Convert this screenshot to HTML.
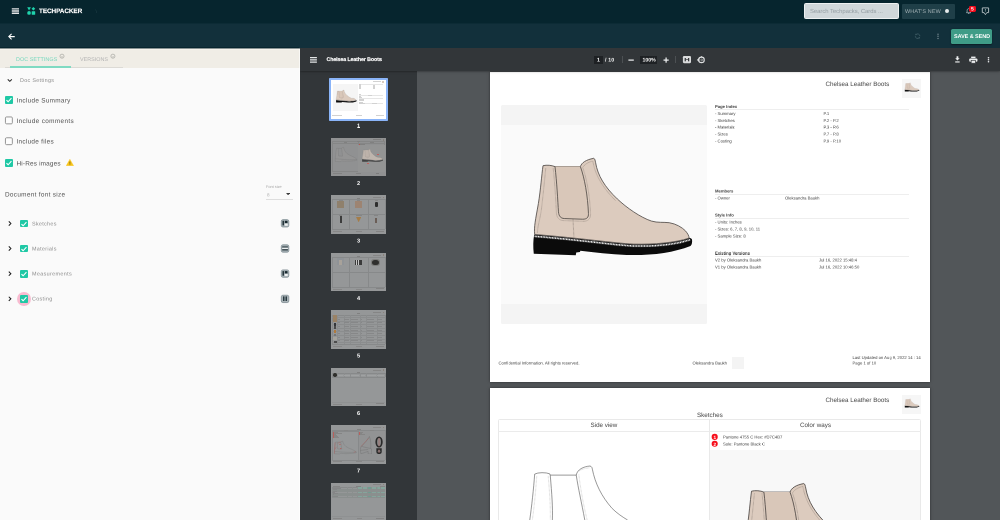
<!DOCTYPE html>
<html><head><meta charset="utf-8"><title>Techpacker</title>
<style>
*{box-sizing:border-box;margin:0;padding:0}
html,body{width:1000px;height:520px;overflow:hidden;background:#fafafa;font-family:"Liberation Sans",sans-serif}
.a{position:absolute}
#tx{position:absolute;left:0;top:0;width:2000px;height:1040px;transform:scale(.5);transform-origin:0 0;pointer-events:none;will-change:transform;overflow:hidden}
.t{position:absolute;white-space:pre;line-height:1;transform:rotate(.02deg);transform-origin:0 0;text-rendering:geometricPrecision}
#top{left:0;top:0;width:1000px;height:23px;background:#06252e}
#bar2{left:0;top:23px;width:1000px;height:25px;background:#12303b}
#left{left:0;top:48px;width:300px;height:472px;background:#fafafa}
#tabs{left:0;top:48px;width:300px;height:20px;background:#f0ede6}
#pdf{left:300px;top:48px;width:700px;height:472px;background:#525659;overflow:hidden}
#pdfbar{left:0;top:0;width:700px;height:22.5px;background:#323639;box-shadow:0 0 2.5px rgba(0,0,0,.6)}
#side{left:0;top:22px;width:117px;height:450px;background:#323639}
.pg{background:#fff;box-shadow:0 0 2.5px rgba(0,0,0,.5)}
.cb{position:absolute;width:7.8px;height:7.8px;border-radius:1px}
.cb.on{background:#1fc8a5}
.cb.off{border:.9px solid #8d8d8d;background:#fdfdfd;border-radius:1.2px}
.th{position:absolute;left:31px;width:55px;height:38.600px;background:#959798;overflow:hidden}
.ln{position:absolute;height:.6px;background:#eeeeee}
.ic{position:absolute;left:281px;width:8px;height:8px;border:1px solid #3b4a51;border-radius:1.6px;background:#b9c3c7}
.ic i{position:absolute;background:#34444b}
.chev{position:absolute}
</style></head><body>

<div class="a" id="top">
  <svg class="a" style="left:11px;top:7px" width="10" height="9" viewBox="0 0 10 9"><path d="M.8 1.800h7.200M.8 4h7.200M.8 6.200h7.200" stroke="#e2e4e5" stroke-width="1.350"/></svg>
  <svg class="a" style="left:27px;top:7px" width="9" height="9" viewBox="0 0 9 9"><path d="M.2 .2h3.700L2.050 3.500z" fill="#1fd3ad"/><path d="M6.400 .1l1.850 1.750L6.400 3.600 4.550 1.850z" fill="#1fd3ad"/><circle cx="2.050" cy="5.900" r="1.850" fill="#1fd3ad"/><rect x="4.700" y="4.150" width="3.500" height="3.500" rx=".3" fill="#1fd3ad"/></svg>
  
  <div class="a" style="left:804px;top:3px;width:95.300px;height:16px;background:#d0d7da;border:1px solid #eef1f2;border-radius:1.500px"></div>
  <div class="a" style="left:902px;top:4px;width:53px;height:14.500px;background:#1f3f48;border-radius:1px"></div>
  <div class="a" style="left:944.800px;top:9px;width:3.800px;height:3.800px;border-radius:50%;background:#e8ecec"></div>
  <svg class="a" style="left:965.800px;top:7.700px" width="5.600" height="6.400" viewBox="0 0 7 8"><path d="M3.500 .8C2 .8 1.400 2 1.400 3.200V5L.6 5.900h5.800L5.600 5V3.200C5.600 2 5 .8 3.500 .8z" fill="none" stroke="#a9b5b9" stroke-width="1"/><circle cx="3.500" cy="7" r=".8" fill="#a9b5b9"/></svg>
  <div class="a" style="left:969.300px;top:6px;width:6.500px;height:6.200px;border-radius:1.400px;background:#f20d1d"></div>
  <svg class="a" style="left:981px;top:7px" width="9" height="9" viewBox="0 0 9 9"><path d="M1.300 .9h6.300v4.700H5.800L4.450 7.700 3.100 5.600H1.300z" fill="none" stroke="#a9b5b9" stroke-width="1" stroke-linejoin="round"/><path d="M4.450 2v1.700M4.450 4.300v.5" stroke="#a9b5b9" stroke-width=".8"/></svg>
</div>
<div class="a" id="bar2">
  <svg class="a" style="left:7.700px;top:9.600px" width="7.200" height="7.200" viewBox="0 0 8 8"><path d="M7.500 4H1.300M4 .9L.9 4 4 7.100" fill="none" stroke="#fff" stroke-width="1.200"/></svg>
  <svg class="a" style="left:912px;top:8px" width="11" height="11" viewBox="0 0 11 11"><g fill="none" stroke="#3f5c65" stroke-width=".85"><path d="M7.900 5.200A2.300 2.300 0 0 0 3.900 3.650"/><path d="M3.300 5.200A2.300 2.300 0 0 0 7.300 6.750"/></g><path d="M3.200 2.600L3.400 4.300 5 3.900z" fill="#3f5c65"/><path d="M8 7.800L7.800 6.100 6.200 6.500z" fill="#3f5c65"/></svg>
  <svg class="a" style="left:934px;top:8px" width="8" height="11" viewBox="0 0 8 11"><g fill="#71868d"><circle cx="4" cy="3.200" r=".75"/><circle cx="4" cy="5.300" r=".75"/><circle cx="4" cy="7.400" r=".75"/></g></svg>
  <div class="a" style="left:951px;top:6px;width:41.400px;height:14.500px;background:#3f9c87;border-radius:1.500px;box-shadow:0 .8px 1.500px rgba(0,0,0,.4)"></div>
</div>
<div class="a" id="left"></div>
<div class="a" id="tabs"></div>
<div class="a" style="left:0;top:48px;width:300px;height:1px;background:#899394"></div><div class="a" style="left:0;top:49px;width:300px;height:1px;background:#f5f2ec"></div>
<div class="a" style="left:5px;top:67.300px;width:118px;height:.7px;background:#dcdad5"></div>
<div class="a" style="left:9.800px;top:65.900px;width:61.200px;height:1.700px;background:#7fdac2"></div>
<svg class="a" style="left:57px;top:51px" width="10" height="10" viewBox="0 0 10 10"><circle cx="5.00" cy="5.20" r="2.050" fill="none" stroke="#a6a6a1" stroke-width=".7"/><path d="M3.90 5.60Q5.00 6.70 6.10 5.60" fill="none" stroke="#a6a6a1" stroke-width=".6"/></svg><svg class="a" style="left:107px;top:51px" width="10" height="10" viewBox="0 0 10 10"><circle cx="5.90" cy="5.20" r="2.050" fill="none" stroke="#a6a6a1" stroke-width=".7"/><path d="M4.80 5.60Q5.90 6.70 7.00 5.60" fill="none" stroke="#a6a6a1" stroke-width=".6"/></svg>
<svg class="a" style="left:5px;top:76px" width="9" height="9" viewBox="0 0 9 9"><path d="M2.75 3.30L4.80 5.35L6.85 3.30" fill="none" stroke="#2a2a2a" stroke-width="1.050"/></svg>
<div class="cb on" style="left:5px;top:96.1px"><svg width="7.800" height="7.800" viewBox="0 0 8 8" style="position:absolute;left:0;top:0"><path d="M1.500 4.200L3.200 5.900 6.600 2.300" fill="none" stroke="#fff" stroke-width="1.100"/></svg></div><svg class="a" style="left:4px;top:115px" width="11" height="11" viewBox="0 0 11 11"><rect x="1.45" y="1.95" width="6.900" height="6.900" rx="1.100" fill="#fdfdfd" stroke="#8a8a8a" stroke-width=".9"/></svg><svg class="a" style="left:4px;top:136px" width="11" height="11" viewBox="0 0 11 11"><rect x="1.45" y="1.75" width="6.900" height="6.900" rx="1.100" fill="#fdfdfd" stroke="#8a8a8a" stroke-width=".9"/></svg><div class="cb on" style="left:5px;top:158.9px"><svg width="7.800" height="7.800" viewBox="0 0 8 8" style="position:absolute;left:0;top:0"><path d="M1.500 4.200L3.200 5.900 6.600 2.300" fill="none" stroke="#fff" stroke-width="1.100"/></svg></div>
<svg class="a" style="left:66.300px;top:158.800px" width="7.800" height="7.200" viewBox="0 0 7.800 7.200"><path d="M3.900 .3L7.600 6.800H.2z" fill="#f8c419" stroke="#f8c419" stroke-width=".4" stroke-linejoin="round"/><path d="M3.900 2.600v2.200M3.900 5.400v.7" stroke="#6b5a1a" stroke-width=".8"/></svg>
<div class="a" style="left:16.900px;top:291.900px;width:13.800px;height:13.800px;border-radius:50%;background:#f8bbd0"></div>
<svg class="a" style="left:5px;top:219px" width="9" height="9" viewBox="0 0 9 9"><path d="M3.80 2.45L5.85 4.50L3.80 6.55" fill="none" stroke="#1c1c1c" stroke-width="1.050"/></svg><div class="cb on" style="left:19.9px;top:219.6px"><svg width="7.800" height="7.800" viewBox="0 0 8 8" style="position:absolute;left:0;top:0"><path d="M1.500 4.200L3.200 5.900 6.600 2.300" fill="none" stroke="#fff" stroke-width="1.100"/></svg></div><svg class="a" style="left:279px;top:218px" width="11" height="11" viewBox="0 0 11 11"><rect x="2.35" y="1.65" width="7.400" height="7.300" rx="1.500" fill="#aab4b8" stroke="#87949a" stroke-width=".9"/><rect x="3.50" y="2.80" width="1.4" height="4.6" fill="#16262d"/><rect x="5.80" y="2.80" width="2.7" height="2.5" fill="#16262d"/><rect x="5.80" y="5.50" width="2.9" height="2.3" fill="#eef1f2"/></svg>
<svg class="a" style="left:5px;top:244px" width="9" height="9" viewBox="0 0 9 9"><path d="M3.80 2.45L5.85 4.50L3.80 6.55" fill="none" stroke="#1c1c1c" stroke-width="1.050"/></svg><div class="cb on" style="left:19.9px;top:244.6px"><svg width="7.800" height="7.800" viewBox="0 0 8 8" style="position:absolute;left:0;top:0"><path d="M1.500 4.200L3.200 5.900 6.600 2.300" fill="none" stroke="#fff" stroke-width="1.100"/></svg></div><svg class="a" style="left:279px;top:243px" width="11" height="11" viewBox="0 0 11 11"><rect x="2.35" y="1.85" width="7.400" height="7.300" rx="1.500" fill="#aab4b8" stroke="#87949a" stroke-width=".9"/><rect x="3.20" y="3.50" width="5.7" height="1.1" fill="#16262d"/><rect x="3.20" y="4.70" width="5.7" height="1.5" fill="#eef1f2"/><rect x="3.20" y="6.30" width="5.7" height="1.1" fill="#16262d"/></svg>
<svg class="a" style="left:5px;top:269px" width="9" height="9" viewBox="0 0 9 9"><path d="M3.80 2.65L5.85 4.70L3.80 6.75" fill="none" stroke="#1c1c1c" stroke-width="1.050"/></svg><div class="cb on" style="left:19.9px;top:269.8px"><svg width="7.800" height="7.800" viewBox="0 0 8 8" style="position:absolute;left:0;top:0"><path d="M1.500 4.200L3.200 5.900 6.600 2.300" fill="none" stroke="#fff" stroke-width="1.100"/></svg></div><svg class="a" style="left:279px;top:268px" width="11" height="11" viewBox="0 0 11 11"><rect x="2.35" y="1.95" width="7.400" height="7.300" rx="1.500" fill="#aab4b8" stroke="#87949a" stroke-width=".9"/><rect x="3.50" y="3.10" width="1.4" height="4.6" fill="#16262d"/><rect x="5.80" y="3.10" width="2.7" height="2.5" fill="#16262d"/><rect x="5.80" y="5.80" width="2.9" height="2.3" fill="#eef1f2"/></svg>
<svg class="a" style="left:5px;top:294px" width="9" height="9" viewBox="0 0 9 9"><path d="M3.80 2.75L5.85 4.80L3.80 6.85" fill="none" stroke="#1c1c1c" stroke-width="1.050"/></svg><div class="cb on" style="left:19.9px;top:294.90000000000003px"><svg width="7.800" height="7.800" viewBox="0 0 8 8" style="position:absolute;left:0;top:0"><path d="M1.500 4.200L3.200 5.900 6.600 2.300" fill="none" stroke="#fff" stroke-width="1.100"/></svg></div><svg class="a" style="left:279px;top:293px" width="11" height="11" viewBox="0 0 11 11"><rect x="2.35" y="2.25" width="7.400" height="7.300" rx="1.500" fill="#aab4b8" stroke="#87949a" stroke-width=".9"/><rect x="4.15" y="3.40" width="1.300" height="4.600" fill="#16262d"/><rect x="6.550" y="3.40" width="1.300" height="4.600" fill="#16262d"/></svg>
<div class="a" style="left:266px;top:199.400px;width:26.500px;height:.6px;background:#dedede"></div>
<svg class="a" style="left:286px;top:193px" width="4.200" height="2.400" viewBox="0 0 4.200 2.400"><path d="M0 0h4.200L2.100 2.300z" fill="#3c3c3c"/></svg>

<div class="a" id="pdf">
<div class="a" id="main" style="left:0;top:0;width:700px;height:472px">
<div class="a pg" style="left:190px;top:24px;width:440px;height:310px">
<div class="a" style="left:10.800px;top:32.900px;width:206.500px;height:219.100px;background:#f4f4f4;border-radius:1.500px"></div>
<div class="a" style="left:10.800px;top:52.900px;width:206.500px;height:179.400px;background:#fafafa"></div>
<svg class="a" style="left:35.00px;top:78.00px;" width="180.00" height="120.00" viewBox="0 0 780 520"><path d="M40,366 C250,383 380,403 470,408 C560,410 650,403 714,380 L723,386 C726,398 724,410 717,416 C640,447 540,458 440,455 C370,452 300,445 240,437 L238,442 L222,444 L220,456 L38,450 C35,420 35,390 40,366Z" fill="#0b0b0b"/><path d="M78,68 C95,64 115,66 130,72 L240,72 C245,55 265,42 298,36 C303,38 304,45 306,55 C315,110 345,160 400,212 C440,250 500,292 548,308 C575,316 600,312 625,315 C655,320 680,335 695,350 C705,362 711,372 711,382 C650,402 560,410 470,408 C380,403 250,383 42,366 C38,335 46,300 58,232 C68,170 72,110 78,68Z" fill="#dccbbe" stroke="#45403d" stroke-width="3.400" stroke-linejoin="round"/><path d="M130,72 C138,140 142,220 145,268 C147,288 155,296 170,297 L250,300 C268,300 276,292 275,275 C272,200 258,120 240,72" fill="#d9c7b9" stroke="#47413e" stroke-width="3.400"/><path d="M208,300 L212,378" fill="none" stroke="#5f5752" stroke-width="2.200" stroke-dasharray="3 2.500"/><path d="M90,78 C84,140 78,200 72,250 C66,300 54,330 54,358" fill="none" stroke="#6f655f" stroke-width="2.200" stroke-dasharray="2.500 2.500"/><path d="M122,78 C130,150 134,230 136,272 C138,296 150,306 170,306 L252,309 C276,309 285,296 284,275 C281,200 268,125 250,76 C258,62 275,52 294,48 C304,110 338,165 393,220" fill="none" stroke="#6f655f" stroke-width="2.200" stroke-dasharray="2.500 2.500"/><path d="M42,374 C250,391 380,411 470,416 C560,418 650,411 717,388" fill="none" stroke="#333" stroke-width="11"/><path d="M42,374 C250,391 380,411 470,416 C560,418 650,411 717,388" fill="none" stroke="#fff" stroke-width="6.500" stroke-dasharray="4 2.800"/></svg>
<div class="a" style="left:412px;top:6.600px;width:18.800px;height:19.100px;background:#f6f6f6"></div>
<svg class="a" style="left:414.04px;top:10.14px;" width="16.47" height="10.98" viewBox="0 0 780 520"><path d="M40,366 C250,383 380,403 470,408 C560,410 650,403 714,380 L723,386 C726,398 724,410 717,416 C640,447 540,458 440,455 C370,452 300,445 240,437 L238,442 L222,444 L220,456 L38,450 C35,420 35,390 40,366Z" fill="#0b0b0b"/><path d="M78,68 C95,64 115,66 130,72 L240,72 C245,55 265,42 298,36 C303,38 304,45 306,55 C315,110 345,160 400,212 C440,250 500,292 548,308 C575,316 600,312 625,315 C655,320 680,335 695,350 C705,362 711,372 711,382 C650,402 560,410 470,408 C380,403 250,383 42,366 C38,335 46,300 58,232 C68,170 72,110 78,68Z" fill="#dccbbe" stroke="#45403d" stroke-width="3.400" stroke-linejoin="round"/><path d="M130,72 C138,140 142,220 145,268 C147,288 155,296 170,297 L250,300 C268,300 276,292 275,275 C272,200 258,120 240,72" fill="#d9c7b9" stroke="#47413e" stroke-width="3.400"/><path d="M208,300 L212,378" fill="none" stroke="#5f5752" stroke-width="2.200" stroke-dasharray="3 2.500"/><path d="M90,78 C84,140 78,200 72,250 C66,300 54,330 54,358" fill="none" stroke="#6f655f" stroke-width="2.200" stroke-dasharray="2.500 2.500"/><path d="M122,78 C130,150 134,230 136,272 C138,296 150,306 170,306 L252,309 C276,309 285,296 284,275 C281,200 268,125 250,76 C258,62 275,52 294,48 C304,110 338,165 393,220" fill="none" stroke="#6f655f" stroke-width="2.200" stroke-dasharray="2.500 2.500"/><path d="M42,374 C250,391 380,411 470,416 C560,418 650,411 717,388" fill="none" stroke="#333" stroke-width="11"/><path d="M42,374 C250,391 380,411 470,416 C560,418 650,411 717,388" fill="none" stroke="#fff" stroke-width="6.500" stroke-dasharray="4 2.800"/></svg>
<div class="ln" style="left:224.800px;top:37.3px;width:194px"></div><div class="ln" style="left:224.800px;top:122.0px;width:194px"></div><div class="ln" style="left:224.800px;top:146.2px;width:194px"></div><div class="ln" style="left:224.800px;top:184.3px;width:194px"></div>
<div class="a" style="left:242.300px;top:285px;width:12.200px;height:12px;background:#f4f4f4"></div>
</div>
<div class="a pg" style="left:190px;top:340px;width:440px;height:140px">
<div class="a" style="left:412px;top:6.600px;width:18.800px;height:19.100px;background:#f6f6f6"></div>
<svg class="a" style="left:414.04px;top:10.14px;" width="16.47" height="10.98" viewBox="0 0 780 520"><path d="M40,366 C250,383 380,403 470,408 C560,410 650,403 714,380 L723,386 C726,398 724,410 717,416 C640,447 540,458 440,455 C370,452 300,445 240,437 L238,442 L222,444 L220,456 L38,450 C35,420 35,390 40,366Z" fill="#0b0b0b"/><path d="M78,68 C95,64 115,66 130,72 L240,72 C245,55 265,42 298,36 C303,38 304,45 306,55 C315,110 345,160 400,212 C440,250 500,292 548,308 C575,316 600,312 625,315 C655,320 680,335 695,350 C705,362 711,372 711,382 C650,402 560,410 470,408 C380,403 250,383 42,366 C38,335 46,300 58,232 C68,170 72,110 78,68Z" fill="#dccbbe" stroke="#45403d" stroke-width="3.400" stroke-linejoin="round"/><path d="M130,72 C138,140 142,220 145,268 C147,288 155,296 170,297 L250,300 C268,300 276,292 275,275 C272,200 258,120 240,72" fill="#d9c7b9" stroke="#47413e" stroke-width="3.400"/><path d="M208,300 L212,378" fill="none" stroke="#5f5752" stroke-width="2.200" stroke-dasharray="3 2.500"/><path d="M90,78 C84,140 78,200 72,250 C66,300 54,330 54,358" fill="none" stroke="#6f655f" stroke-width="2.200" stroke-dasharray="2.500 2.500"/><path d="M122,78 C130,150 134,230 136,272 C138,296 150,306 170,306 L252,309 C276,309 285,296 284,275 C281,200 268,125 250,76 C258,62 275,52 294,48 C304,110 338,165 393,220" fill="none" stroke="#6f655f" stroke-width="2.200" stroke-dasharray="2.500 2.500"/><path d="M42,374 C250,391 380,411 470,416 C560,418 650,411 717,388" fill="none" stroke="#333" stroke-width="11"/><path d="M42,374 C250,391 380,411 470,416 C560,418 650,411 717,388" fill="none" stroke="#fff" stroke-width="6.500" stroke-dasharray="4 2.800"/></svg>
<div class="a" style="left:8.400px;top:30.800px;width:422.400px;height:120px;border:.6px solid #e9e9e9;border-radius:1.500px"></div>
<div class="a" style="left:8.400px;top:43.300px;width:422.400px;height:.6px;background:#ebebeb"></div>
<div class="a" style="left:219.300px;top:30.800px;width:.6px;height:120px;background:#e9e9e9"></div>
<div class="a" style="left:220px;top:62px;width:210.200px;height:80px;background:#f8f8f8"></div>
<svg class="a" style="left:220px;top:44px" width="10" height="17" viewBox="0 0 10 17"><circle cx="4.700" cy="4.900" r="3.050" fill="#f70f1c"/><circle cx="4.700" cy="11.800" r="3.050" fill="#f70f1c"/></svg>

<svg class="a" style="left:243.46px;top:86.84px;" width="185.40" height="123.60" viewBox="0 0 780 520"><path d="M40,366 C250,383 380,403 470,408 C560,410 650,403 714,380 L723,386 C726,398 724,410 717,416 C640,447 540,458 440,455 C370,452 300,445 240,437 L238,442 L222,444 L220,456 L38,450 C35,420 35,390 40,366Z" fill="#0b0b0b"/><path d="M78,68 C95,64 115,66 130,72 L240,72 C245,55 265,42 298,36 C303,38 304,45 306,55 C315,110 345,160 400,212 C440,250 500,292 548,308 C575,316 600,312 625,315 C655,320 680,335 695,350 C705,362 711,372 711,382 C650,402 560,410 470,408 C380,403 250,383 42,366 C38,335 46,300 58,232 C68,170 72,110 78,68Z" fill="#dccbbe" stroke="#45403d" stroke-width="3.400" stroke-linejoin="round"/><path d="M130,72 C138,140 142,220 145,268 C147,288 155,296 170,297 L250,300 C268,300 276,292 275,275 C272,200 258,120 240,72" fill="#d9c7b9" stroke="#47413e" stroke-width="3.400"/><path d="M208,300 L212,378" fill="none" stroke="#5f5752" stroke-width="2.200" stroke-dasharray="3 2.500"/><path d="M90,78 C84,140 78,200 72,250 C66,300 54,330 54,358" fill="none" stroke="#6f655f" stroke-width="2.200" stroke-dasharray="2.500 2.500"/><path d="M122,78 C130,150 134,230 136,272 C138,296 150,306 170,306 L252,309 C276,309 285,296 284,275 C281,200 268,125 250,76 C258,62 275,52 294,48 C304,110 338,165 393,220" fill="none" stroke="#6f655f" stroke-width="2.200" stroke-dasharray="2.500 2.500"/><path d="M42,374 C250,391 380,411 470,416 C560,418 650,411 717,388" fill="none" stroke="#333" stroke-width="11"/><path d="M42,374 C250,391 380,411 470,416 C560,418 650,411 717,388" fill="none" stroke="#fff" stroke-width="6.500" stroke-dasharray="4 2.800"/></svg>
<svg class="a" style="left:0;top:-3px" width="240" height="135.060" viewBox="0 0 924 520"><g fill="none" stroke="#4a4a4a" stroke-width="2.200" stroke-linejoin="round">
<path d="M153,520 C160,470 168,400 172,343 C185,336 215,336 230,342 L232,348 C238,420 242,470 240,520"/>
<path d="M232,347 L332,347"/>
<path d="M365,520 C352,450 340,400 332,347 C336,325 360,314 385,312 C392,314 393,318 394,324 C405,380 430,430 470,475 C490,495 510,508 530,520"/>
</g><g fill="none" stroke="#777" stroke-width="1.300" stroke-dasharray="2.500 2.500"><path d="M180,350 C176,410 170,470 163,520"/><path d="M224,350 C230,420 233,470 232,520"/><path d="M342,345 C350,410 360,460 374,520"/><path d="M342,332 C352,324 368,320 384,319"/></g></svg>
</div>
</div>
<div class="a" id="side">
<div class="a" style="left:28.700px;top:7.700px;width:59.700px;height:43.300px;background:#8ab4f8;border-radius:.8px"></div>
<div class="th" style="top:10.0px;background:#fff"><div class="a" style="left:1.63px;top:4.08px;width:25.31px;height:26.95px;background:#f5f5f5"></div><svg class="a" style="left:3.73px;top:9.23px" width="23.22" height="15.48" viewBox="0 0 780 520"><path d="M40,366 C250,383 380,403 470,408 C560,410 650,403 714,380 L723,386 C726,398 724,410 717,416 C640,447 540,458 440,455 C370,452 300,445 240,437 L238,442 L222,444 L220,456 L38,450 C35,420 35,390 40,366Z" fill="#0b0b0b"/><path d="M78,68 C95,64 115,66 130,72 L240,72 C245,55 265,42 298,36 C303,38 304,45 306,55 C315,110 345,160 400,212 C440,250 500,292 548,308 C575,316 600,312 625,315 C655,320 680,335 695,350 C705,362 711,372 711,382 C650,402 560,410 470,408 C380,403 250,383 42,366 C38,335 46,300 58,232 C68,170 72,110 78,68Z" fill="#dccbbe" stroke="#45403d" stroke-width="3.400" stroke-linejoin="round"/><path d="M130,72 C138,140 142,220 145,268 C147,288 155,296 170,297 L250,300 C268,300 276,292 275,275 C272,200 258,120 240,72" fill="#d9c7b9" stroke="#47413e" stroke-width="3.400"/><path d="M208,300 L212,378" fill="none" stroke="#5f5752" stroke-width="2.200" stroke-dasharray="3 2.500"/><path d="M90,78 C84,140 78,200 72,250 C66,300 54,330 54,358" fill="none" stroke="#6f655f" stroke-width="2.200" stroke-dasharray="2.500 2.500"/><path d="M122,78 C130,150 134,230 136,272 C138,296 150,306 170,306 L252,309 C276,309 285,296 284,275 C281,200 268,125 250,76 C258,62 275,52 294,48 C304,110 338,165 393,220" fill="none" stroke="#6f655f" stroke-width="2.200" stroke-dasharray="2.500 2.500"/><path d="M42,374 C250,391 380,411 470,416 C560,418 650,411 717,388" fill="none" stroke="#333" stroke-width="11"/><path d="M42,374 C250,391 380,411 470,416 C560,418 650,411 717,388" fill="none" stroke="#fff" stroke-width="6.500" stroke-dasharray="4 2.800"/></svg><div class="a" style="left:27.91px;top:4.47px;width:24.54px;height:0.40px;background:#e6e6e6"></div><div class="a" style="left:27.91px;top:15.34px;width:24.54px;height:0.40px;background:#e6e6e6"></div><div class="a" style="left:27.91px;top:18.42px;width:24.54px;height:0.40px;background:#e6e6e6"></div><div class="a" style="left:27.91px;top:23.04px;width:24.54px;height:0.40px;background:#e6e6e6"></div><div class="a" style="left:27.91px;top:3.79px;width:2.21px;height:0.77px;background:#d2d2d2"></div><div class="a" style="left:27.91px;top:5.24px;width:2.02px;height:3.37px;background:#d2d2d2"></div><div class="a" style="left:41.86px;top:5.24px;width:1.92px;height:3.37px;background:#d2d2d2"></div><div class="a" style="left:27.91px;top:14.19px;width:2.02px;height:0.96px;background:#d2d2d2"></div><div class="a" style="left:27.91px;top:15.63px;width:1.92px;height:0.67px;background:#d2d2d2"></div><div class="a" style="left:36.57px;top:15.44px;width:4.33px;height:0.67px;background:#d2d2d2"></div><div class="a" style="left:27.91px;top:17.27px;width:2.60px;height:0.77px;background:#d2d2d2"></div><div class="a" style="left:27.91px;top:18.81px;width:5.29px;height:1.73px;background:#d2d2d2"></div><div class="a" style="left:27.91px;top:21.89px;width:3.85px;height:0.77px;background:#d2d2d2"></div><div class="a" style="left:27.91px;top:23.33px;width:5.77px;height:0.96px;background:#d2d2d2"></div><div class="a" style="left:40.90px;top:23.33px;width:4.81px;height:0.96px;background:#d2d2d2"></div><div class="a" style="left:0.96px;top:35.17px;width:9.62px;height:0.58px;background:#d2d2d2"></div><div class="a" style="left:25.02px;top:35.17px;width:6.26px;height:0.58px;background:#d2d2d2"></div><div class="a" style="left:44.75px;top:34.88px;width:8.18px;height:1.06px;background:#d2d2d2"></div><div class="a" style="left:41.86px;top:1.10px;width:7.70px;height:0.67px;background:#d2d2d2"></div><div class="a" style="left:51.49px;top:1.10px;width:1.54px;height:1.54px;background:#d9cbbf"></div></div>
<div class="th" style="top:67.5px;background:#909192"><div class="a" style="left:1.26px;top:3.97px;width:52.65px;height:30.51px;border:.4px solid #858686"></div><div class="a" style="left:1.26px;top:5.61px;width:52.65px;height:.4px;background:#858686"></div><div class="a" style="left:27.24px;top:3.97px;width:.4px;height:30.51px;background:#858686"></div><div class="a" style="left:27.44px;top:7.53px;width:26.28px;height:26.76px;background:#939494"></div><svg class="a" style="left:30.31px;top:10.81px;opacity:.6" width="23.69" height="15.79" viewBox="0 0 780 520"><path d="M40,366 C250,383 380,403 470,408 C560,410 650,403 714,380 L723,386 C726,398 724,410 717,416 C640,447 540,458 440,455 C370,452 300,445 240,437 L238,442 L222,444 L220,456 L38,450 C35,420 35,390 40,366Z" fill="#0b0b0b"/><path d="M78,68 C95,64 115,66 130,72 L240,72 C245,55 265,42 298,36 C303,38 304,45 306,55 C315,110 345,160 400,212 C440,250 500,292 548,308 C575,316 600,312 625,315 C655,320 680,335 695,350 C705,362 711,372 711,382 C650,402 560,410 470,408 C380,403 250,383 42,366 C38,335 46,300 58,232 C68,170 72,110 78,68Z" fill="#dccbbe" stroke="#45403d" stroke-width="3.400" stroke-linejoin="round"/><path d="M130,72 C138,140 142,220 145,268 C147,288 155,296 170,297 L250,300 C268,300 276,292 275,275 C272,200 258,120 240,72" fill="#d9c7b9" stroke="#47413e" stroke-width="3.400"/><path d="M208,300 L212,378" fill="none" stroke="#5f5752" stroke-width="2.200" stroke-dasharray="3 2.500"/><path d="M90,78 C84,140 78,200 72,250 C66,300 54,330 54,358" fill="none" stroke="#6f655f" stroke-width="2.200" stroke-dasharray="2.500 2.500"/><path d="M122,78 C130,150 134,230 136,272 C138,296 150,306 170,306 L252,309 C276,309 285,296 284,275 C281,200 268,125 250,76 C258,62 275,52 294,48 C304,110 338,165 393,220" fill="none" stroke="#6f655f" stroke-width="2.200" stroke-dasharray="2.500 2.500"/><path d="M42,374 C250,391 380,411 470,416 C560,418 650,411 717,388" fill="none" stroke="#333" stroke-width="11"/><path d="M42,374 C250,391 380,411 470,416 C560,418 650,411 717,388" fill="none" stroke="#fff" stroke-width="6.500" stroke-dasharray="4 2.800"/></svg><svg class="a" style="left:2.95px;top:8.35px" width="24.84" height="17.94" viewBox="0 0 780 520" preserveAspectRatio="none"><path d="M78,68 C95,64 115,66 130,72 L240,72 C245,55 265,42 298,36 C315,110 345,160 400,212 C500,285 650,318 712,380 L720,414 C540,450 300,440 232,432 L212,453 L40,447 L42,366 C40,330 72,110 78,68Z M130,72 L145,290 L270,295 L240,72 M42,370 C250,388 560,420 716,386" fill="#949494" stroke="#707070" stroke-width="7"/></svg><div class="a" style="left:42.16px;top:1.66px;width:7.70px;height:0.58px;background:#7e7e7e"></div><div class="a" style="left:51.79px;top:1.47px;width:1.54px;height:1.54px;background:#857f7a"></div><div class="a" style="left:25.99px;top:3.01px;width:2.89px;height:0.58px;background:#808080"></div><div class="a" style="left:12.81px;top:4.55px;width:3.18px;height:0.58px;background:#808080"></div><div class="a" style="left:38.79px;top:4.55px;width:3.85px;height:0.58px;background:#808080"></div><div class="a" style="left:27.53px;top:6.28px;width:1.15px;height:0.77px;background:#c0504d"></div><div class="a" style="left:29.26px;top:6.47px;width:4.72px;height:0.38px;background:#808080"></div><div class="a" style="left:46.20px;top:16.48px;width:1.54px;height:0.77px;background:#c0605d"></div><div class="a" style="left:36.19px;top:25.53px;width:1.54px;height:0.77px;background:#c0605d"></div><div class="a" style="left:1.74px;top:35.54px;width:9.14px;height:0.58px;background:#828282"></div><div class="a" style="left:25.32px;top:35.54px;width:4.52px;height:0.58px;background:#828282"></div><div class="a" style="left:45.05px;top:35.35px;width:3.37px;height:0.96px;background:#7c7c7c"></div></div>
<div class="th" style="top:125.0px"><div class="a" style="left:42.16px;top:2.12px;width:7.70px;height:0.58px;background:#858585"></div><div class="a" style="left:51.78px;top:1.73px;width:1.54px;height:1.54px;background:#8a827b"></div><div class="a" style="left:1.73px;top:36.19px;width:9.14px;height:0.58px;background:#878787"></div><div class="a" style="left:25.31px;top:36.19px;width:5.77px;height:0.58px;background:#878787"></div><div class="a" style="left:45.04px;top:35.80px;width:7.70px;height:0.96px;background:#838383"></div><div class="a" style="left:1.25px;top:4.14px;width:52.65px;height:0.40px;background:#87898a"></div><div class="a" style="left:1.25px;top:34.46px;width:52.65px;height:0.40px;background:#87898a"></div><div class="a" style="left:1.25px;top:19.06px;width:52.65px;height:0.40px;background:#87898a"></div><div class="a" style="left:1.25px;top:4.14px;width:0.40px;height:30.32px;background:#87898a"></div><div class="a" style="left:53.71px;top:4.14px;width:0.40px;height:30.32px;background:#87898a"></div><div class="a" style="left:18.38px;top:4.14px;width:0.40px;height:30.32px;background:#87898a"></div><div class="a" style="left:36.57px;top:4.14px;width:0.40px;height:30.32px;background:#87898a"></div><div class="a" style="left:6.35px;top:5.77px;width:6.93px;height:7.03px;background:#8f806c"></div><div class="a" style="left:23.87px;top:5.77px;width:7.22px;height:7.03px;background:#9d8472"></div><div class="a" style="left:43.70px;top:6.54px;width:3.27px;height:5.77px;background:#2e2e2e;border-radius:1px"></div><div class="a" style="left:8.66px;top:20.98px;width:2.21px;height:6.74px;background:#3c3c3c"></div><svg class="a" style="left:24.83px;top:21.94px" width="5.29" height="5.29" viewBox="0 0 6 6"><path d="M0 0h6L3 6z" fill="#a57d48"/></svg><div class="a" style="left:43.89px;top:22.91px;width:2.60px;height:4.81px;background:#6b5e57"></div><div class="a" style="left:7.99px;top:4.62px;width:3.85px;height:0.48px;background:#858585"></div><div class="a" style="left:25.99px;top:3.46px;width:2.89px;height:0.58px;background:#808080"></div><div class="a" style="left:25.60px;top:4.62px;width:3.85px;height:0.48px;background:#858585"></div><div class="a" style="left:43.60px;top:4.62px;width:3.37px;height:0.48px;background:#858585"></div><div class="a" style="left:8.47px;top:19.83px;width:2.41px;height:0.48px;background:#858585"></div><div class="a" style="left:24.83px;top:19.83px;width:5.77px;height:0.48px;background:#858585"></div><div class="a" style="left:43.12px;top:19.83px;width:4.33px;height:0.48px;background:#858585"></div></div>
<div class="th" style="top:182.5px"><div class="a" style="left:42.16px;top:2.12px;width:7.70px;height:0.58px;background:#858585"></div><div class="a" style="left:51.78px;top:1.73px;width:1.54px;height:1.54px;background:#8a827b"></div><div class="a" style="left:1.73px;top:36.19px;width:9.14px;height:0.58px;background:#878787"></div><div class="a" style="left:25.31px;top:36.19px;width:5.77px;height:0.58px;background:#878787"></div><div class="a" style="left:45.04px;top:35.80px;width:7.70px;height:0.96px;background:#838383"></div><div class="a" style="left:1.25px;top:4.62px;width:52.65px;height:0.40px;background:#87898a"></div><div class="a" style="left:1.25px;top:34.94px;width:52.65px;height:0.40px;background:#87898a"></div><div class="a" style="left:1.25px;top:19.54px;width:52.65px;height:0.40px;background:#87898a"></div><div class="a" style="left:1.25px;top:4.62px;width:0.40px;height:30.32px;background:#87898a"></div><div class="a" style="left:53.71px;top:4.62px;width:0.40px;height:30.32px;background:#87898a"></div><div class="a" style="left:18.38px;top:4.62px;width:0.40px;height:30.32px;background:#87898a"></div><div class="a" style="left:36.57px;top:4.62px;width:0.40px;height:30.32px;background:#87898a"></div><div class="a" style="left:6.35px;top:5.77px;width:6.93px;height:7.03px;background:#8f9397"></div><div class="a" style="left:8.28px;top:7.31px;width:3.08px;height:4.81px;background:#a8a29a"></div><div class="a" style="left:23.87px;top:7.03px;width:7.51px;height:5.77px;background:#c8c8c8"></div><div class="a" style="left:24.45px;top:7.31px;width:0.87px;height:5.49px;background:#3a3a3a"></div><div class="a" style="left:25.99px;top:7.31px;width:0.87px;height:5.49px;background:#3a3a3a"></div><div class="a" style="left:27.53px;top:7.31px;width:0.87px;height:5.49px;background:#3a3a3a"></div><div class="a" style="left:29.07px;top:7.31px;width:0.87px;height:5.49px;background:#3a3a3a"></div><div class="a" style="left:30.22px;top:7.31px;width:0.87px;height:5.49px;background:#3a3a3a"></div><div class="a" style="left:40.42px;top:6.35px;width:8.47px;height:6.93px;background:#7d7e7c;border-radius:40%"></div><div class="a" style="left:41.39px;top:7.03px;width:6.35px;height:5.49px;background:#2f2f2d;border-radius:50%"></div><div class="a" style="left:25.99px;top:3.85px;width:2.89px;height:0.58px;background:#808080"></div></div>
<div class="th" style="top:240.0px"><div class="a" style="left:42.16px;top:2.12px;width:7.70px;height:0.58px;background:#858585"></div><div class="a" style="left:51.78px;top:1.73px;width:1.54px;height:1.54px;background:#8a827b"></div><div class="a" style="left:1.73px;top:36.19px;width:9.14px;height:0.58px;background:#878787"></div><div class="a" style="left:25.31px;top:36.19px;width:5.77px;height:0.58px;background:#878787"></div><div class="a" style="left:45.04px;top:35.80px;width:7.70px;height:0.96px;background:#838383"></div><div class="a" style="left:1.25px;top:4.62px;width:52.65px;height:0.40px;background:#87898a"></div><div class="a" style="left:1.25px;top:34.26px;width:52.65px;height:0.40px;background:#87898a"></div><div class="a" style="left:1.25px;top:4.62px;width:0.40px;height:29.64px;background:#87898a"></div><div class="a" style="left:53.71px;top:4.62px;width:0.40px;height:29.64px;background:#87898a"></div><div class="a" style="left:1.25px;top:7.31px;width:52.65px;height:0.40px;background:#8b8d8e"></div><div class="a" style="left:1.25px;top:10.88px;width:52.65px;height:0.40px;background:#8b8d8e"></div><div class="a" style="left:1.25px;top:14.44px;width:52.65px;height:0.40px;background:#8b8d8e"></div><div class="a" style="left:1.25px;top:17.90px;width:52.65px;height:0.40px;background:#8b8d8e"></div><div class="a" style="left:1.25px;top:21.46px;width:52.65px;height:0.40px;background:#8b8d8e"></div><div class="a" style="left:1.25px;top:25.02px;width:52.65px;height:0.40px;background:#8b8d8e"></div><div class="a" style="left:1.25px;top:28.68px;width:52.65px;height:0.40px;background:#8b8d8e"></div><div class="a" style="left:1.25px;top:32.05px;width:52.65px;height:0.40px;background:#8b8d8e"></div><div class="a" style="left:6.35px;top:4.62px;width:0.40px;height:29.64px;background:#8b8d8e"></div><div class="a" style="left:12.80px;top:4.62px;width:0.40px;height:29.64px;background:#8b8d8e"></div><div class="a" style="left:19.06px;top:4.62px;width:0.40px;height:29.64px;background:#8b8d8e"></div><div class="a" style="left:28.87px;top:4.62px;width:0.40px;height:29.64px;background:#8b8d8e"></div><div class="a" style="left:35.23px;top:4.62px;width:0.40px;height:29.64px;background:#8b8d8e"></div><div class="a" style="left:45.52px;top:4.62px;width:0.40px;height:29.64px;background:#8b8d8e"></div><div class="a" style="left:2.21px;top:5.10px;width:3.56px;height:7.03px;background:#9a8265"></div><div class="a" style="left:2.89px;top:12.80px;width:2.21px;height:2.89px;background:#35373a"></div><div class="a" style="left:2.89px;top:16.17px;width:2.21px;height:2.89px;background:#4a4a4a"></div><div class="a" style="left:2.89px;top:19.83px;width:2.21px;height:2.89px;background:#b07a3d"></div><div class="a" style="left:3.18px;top:23.87px;width:1.73px;height:2.41px;background:#777"></div><div class="a" style="left:2.21px;top:26.76px;width:3.56px;height:3.37px;background:#a5a39d"></div><div class="a" style="left:2.50px;top:30.61px;width:3.27px;height:2.89px;background:#4d4d4d"></div><div class="a" style="left:7.03px;top:8.76px;width:2.41px;height:0.48px;background:#868788"></div><div class="a" style="left:13.47px;top:8.76px;width:4.43px;height:0.48px;background:#868788"></div><div class="a" style="left:19.83px;top:8.76px;width:6.93px;height:0.48px;background:#868788"></div><div class="a" style="left:29.64px;top:8.76px;width:1.44px;height:0.48px;background:#868788"></div><div class="a" style="left:35.90px;top:8.76px;width:7.22px;height:0.48px;background:#868788"></div><div class="a" style="left:46.20px;top:8.76px;width:5.10px;height:0.48px;background:#868788"></div><div class="a" style="left:7.03px;top:12.42px;width:2.41px;height:0.48px;background:#868788"></div><div class="a" style="left:13.47px;top:12.42px;width:4.43px;height:0.48px;background:#868788"></div><div class="a" style="left:19.83px;top:12.42px;width:6.93px;height:0.48px;background:#868788"></div><div class="a" style="left:29.64px;top:12.42px;width:1.44px;height:0.48px;background:#868788"></div><div class="a" style="left:35.90px;top:12.42px;width:7.22px;height:0.48px;background:#868788"></div><div class="a" style="left:46.20px;top:12.42px;width:5.10px;height:0.48px;background:#868788"></div><div class="a" style="left:7.03px;top:15.98px;width:2.41px;height:0.48px;background:#868788"></div><div class="a" style="left:13.47px;top:15.98px;width:4.43px;height:0.48px;background:#868788"></div><div class="a" style="left:19.83px;top:15.98px;width:6.93px;height:0.48px;background:#868788"></div><div class="a" style="left:29.64px;top:15.98px;width:1.44px;height:0.48px;background:#868788"></div><div class="a" style="left:35.90px;top:15.98px;width:7.22px;height:0.48px;background:#868788"></div><div class="a" style="left:46.20px;top:15.98px;width:5.10px;height:0.48px;background:#868788"></div><div class="a" style="left:7.03px;top:19.54px;width:2.41px;height:0.48px;background:#868788"></div><div class="a" style="left:13.47px;top:19.54px;width:4.43px;height:0.48px;background:#868788"></div><div class="a" style="left:19.83px;top:19.54px;width:6.93px;height:0.48px;background:#868788"></div><div class="a" style="left:29.64px;top:19.54px;width:1.44px;height:0.48px;background:#868788"></div><div class="a" style="left:35.90px;top:19.54px;width:7.22px;height:0.48px;background:#868788"></div><div class="a" style="left:46.20px;top:19.54px;width:5.10px;height:0.48px;background:#868788"></div><div class="a" style="left:7.03px;top:23.20px;width:2.41px;height:0.48px;background:#868788"></div><div class="a" style="left:13.47px;top:23.20px;width:4.43px;height:0.48px;background:#868788"></div><div class="a" style="left:19.83px;top:23.20px;width:6.93px;height:0.48px;background:#868788"></div><div class="a" style="left:29.64px;top:23.20px;width:1.44px;height:0.48px;background:#868788"></div><div class="a" style="left:35.90px;top:23.20px;width:7.22px;height:0.48px;background:#868788"></div><div class="a" style="left:46.20px;top:23.20px;width:5.10px;height:0.48px;background:#868788"></div><div class="a" style="left:7.03px;top:26.76px;width:2.41px;height:0.48px;background:#868788"></div><div class="a" style="left:13.47px;top:26.76px;width:4.43px;height:0.48px;background:#868788"></div><div class="a" style="left:19.83px;top:26.76px;width:6.93px;height:0.48px;background:#868788"></div><div class="a" style="left:29.64px;top:26.76px;width:1.44px;height:0.48px;background:#868788"></div><div class="a" style="left:35.90px;top:26.76px;width:7.22px;height:0.48px;background:#868788"></div><div class="a" style="left:46.20px;top:26.76px;width:5.10px;height:0.48px;background:#868788"></div><div class="a" style="left:7.03px;top:30.41px;width:2.41px;height:0.48px;background:#868788"></div><div class="a" style="left:13.47px;top:30.41px;width:4.43px;height:0.48px;background:#868788"></div><div class="a" style="left:19.83px;top:30.41px;width:6.93px;height:0.48px;background:#868788"></div><div class="a" style="left:29.64px;top:30.41px;width:1.44px;height:0.48px;background:#868788"></div><div class="a" style="left:35.90px;top:30.41px;width:7.22px;height:0.48px;background:#868788"></div><div class="a" style="left:46.20px;top:30.41px;width:5.10px;height:0.48px;background:#868788"></div><div class="a" style="left:25.99px;top:3.46px;width:2.89px;height:0.58px;background:#808080"></div></div>
<div class="th" style="top:297.5px"><div class="a" style="left:42.16px;top:2.12px;width:7.70px;height:0.58px;background:#858585"></div><div class="a" style="left:51.78px;top:1.73px;width:1.54px;height:1.54px;background:#8a827b"></div><div class="a" style="left:1.73px;top:36.19px;width:9.14px;height:0.58px;background:#878787"></div><div class="a" style="left:25.31px;top:36.19px;width:5.77px;height:0.58px;background:#878787"></div><div class="a" style="left:45.04px;top:35.80px;width:7.70px;height:0.96px;background:#838383"></div><div class="a" style="left:1.25px;top:5.10px;width:52.65px;height:0.40px;background:#87898a"></div><div class="a" style="left:1.25px;top:9.43px;width:52.65px;height:0.40px;background:#87898a"></div><div class="a" style="left:1.25px;top:5.10px;width:0.40px;height:4.33px;background:#87898a"></div><div class="a" style="left:53.71px;top:5.10px;width:0.40px;height:4.33px;background:#87898a"></div><div class="a" style="left:1.25px;top:34.26px;width:52.65px;height:0.40px;background:#8f9192"></div><div class="a" style="left:6.35px;top:5.10px;width:0.40px;height:4.33px;background:#8b8d8e"></div><div class="a" style="left:12.80px;top:5.10px;width:0.40px;height:4.33px;background:#8b8d8e"></div><div class="a" style="left:19.06px;top:5.10px;width:0.40px;height:4.33px;background:#8b8d8e"></div><div class="a" style="left:28.87px;top:5.10px;width:0.40px;height:4.33px;background:#8b8d8e"></div><div class="a" style="left:35.23px;top:5.10px;width:0.40px;height:4.33px;background:#8b8d8e"></div><div class="a" style="left:45.52px;top:5.10px;width:0.40px;height:4.33px;background:#8b8d8e"></div><div class="a" style="left:2.02px;top:5.58px;width:3.75px;height:3.66px;background:#2f2f2c;border-radius:45%"></div><div class="a" style="left:7.03px;top:7.03px;width:4.81px;height:1.44px;background:#9fa1a2"></div><div class="a" style="left:13.47px;top:7.03px;width:5.10px;height:1.44px;background:#9fa1a2"></div><div class="a" style="left:19.83px;top:7.03px;width:8.37px;height:1.44px;background:#9fa1a2"></div><div class="a" style="left:29.64px;top:7.03px;width:4.81px;height:1.44px;background:#9fa1a2"></div><div class="a" style="left:35.90px;top:7.03px;width:9.14px;height:1.44px;background:#9fa1a2"></div><div class="a" style="left:46.20px;top:7.03px;width:7.03px;height:1.44px;background:#9fa1a2"></div><div class="a" style="left:25.99px;top:4.14px;width:2.89px;height:0.58px;background:#808080"></div></div>
<div class="th" style="top:355.0px"><div class="a" style="left:42.16px;top:2.12px;width:7.70px;height:0.58px;background:#858585"></div><div class="a" style="left:51.78px;top:1.73px;width:1.54px;height:1.54px;background:#8a827b"></div><div class="a" style="left:1.73px;top:36.19px;width:9.14px;height:0.58px;background:#878787"></div><div class="a" style="left:25.31px;top:36.19px;width:5.77px;height:0.58px;background:#878787"></div><div class="a" style="left:45.04px;top:35.80px;width:7.70px;height:0.96px;background:#838383"></div><div class="a" style="left:1.25px;top:4.62px;width:52.65px;height:0.40px;background:#87898a"></div><div class="a" style="left:1.25px;top:34.94px;width:52.65px;height:0.40px;background:#87898a"></div><div class="a" style="left:1.25px;top:6.16px;width:52.65px;height:0.40px;background:#87898a"></div><div class="a" style="left:1.25px;top:4.62px;width:0.40px;height:30.32px;background:#87898a"></div><div class="a" style="left:53.71px;top:4.62px;width:0.40px;height:30.32px;background:#87898a"></div><div class="a" style="left:27.05px;top:4.62px;width:0.40px;height:30.32px;background:#87898a"></div><div class="a" style="left:27.53px;top:6.35px;width:26.18px;height:28.39px;background:#929394"></div><div class="a" style="left:1.54px;top:6.54px;width:0.96px;height:0.67px;background:#b8605c"></div><div class="a" style="left:2.89px;top:6.64px;width:3.85px;height:0.40px;background:#858585"></div><div class="a" style="left:1.54px;top:7.70px;width:0.96px;height:0.67px;background:#b8605c"></div><div class="a" style="left:2.89px;top:7.80px;width:8.18px;height:0.40px;background:#858585"></div><div class="a" style="left:1.54px;top:8.85px;width:0.96px;height:0.67px;background:#b8605c"></div><div class="a" style="left:2.89px;top:8.95px;width:2.41px;height:0.40px;background:#858585"></div><div class="a" style="left:1.54px;top:10.01px;width:0.96px;height:0.67px;background:#b8605c"></div><div class="a" style="left:2.89px;top:10.11px;width:3.37px;height:0.40px;background:#858585"></div><div class="a" style="left:1.54px;top:11.16px;width:0.96px;height:0.67px;background:#b8605c"></div><div class="a" style="left:2.89px;top:11.26px;width:4.33px;height:0.40px;background:#858585"></div><div class="a" style="left:1.54px;top:12.32px;width:0.96px;height:0.67px;background:#b8605c"></div><div class="a" style="left:2.89px;top:12.42px;width:5.29px;height:0.40px;background:#858585"></div><div class="a" style="left:27.53px;top:6.54px;width:1.15px;height:0.67px;background:#b8605c"></div><div class="a" style="left:29.16px;top:6.64px;width:2.41px;height:0.40px;background:#858585"></div><div class="a" style="left:27.53px;top:7.70px;width:1.15px;height:0.67px;background:#b8605c"></div><div class="a" style="left:29.16px;top:7.80px;width:1.92px;height:0.40px;background:#858585"></div><div class="a" style="left:27.53px;top:8.85px;width:1.15px;height:0.67px;background:#b8605c"></div><div class="a" style="left:29.16px;top:8.95px;width:4.81px;height:0.40px;background:#858585"></div><svg class="a" style="left:2.18px;top:15.45px" width="25.30" height="16.07" viewBox="0 0 780 520" preserveAspectRatio="none"><path d="M78,68 C95,64 115,66 130,72 L240,72 C245,55 265,42 298,36 C315,110 345,160 400,212 C500,285 650,318 712,380 L720,414 C540,450 300,440 232,432 L212,453 L40,447 L42,366 C40,330 72,110 78,68Z M130,72 L145,290 L270,295 L240,72 M42,370 C250,388 560,420 716,386" fill="none" stroke="#6a6a6a" stroke-width="8"/><path d="M60,80 L45,440 M140,110 L235,60 M60,300 L110,220 M640,400 L700,380" stroke="#c0504d" stroke-width="10"/><rect x="200" y="130" width="30" height="30" fill="#c0504d"/><rect x="225" y="260" width="30" height="30" fill="#c0504d"/></svg><svg class="a" style="left:28.87px;top:10.88px" width="12.32" height="18.29" viewBox="0 0 128 190"><path d="M98,5 C112,40 116,90 110,130 L120,135 L122,188 L85,188 L84,160 L10,185 L4,150 C2,130 6,118 18,105 C50,70 80,40 98,5Z M18,105 C40,120 80,120 110,130 M4,150 L84,140" fill="none" stroke="#6a6a6a" stroke-width="3.500"/><path d="M10,110 L92,20" stroke="#c0504d" stroke-width="3"/></svg><svg class="a" style="left:43.89px;top:10.88px" width="8.08" height="18.29" viewBox="0 0 84 190"><ellipse cx="42" cy="62" rx="38" ry="58" fill="#2a2a2a"/><ellipse cx="42" cy="62" rx="20" ry="42" fill="#8c8c8c"/><path d="M14,128 h56 v38 q0,22 -28,22 q-28,0 -28,-22z" fill="#2a2a2a"/><ellipse cx="42" cy="158" rx="13" ry="14" fill="#777"/><path d="M42,20 v90 M42,140 v35" stroke="#c0504d" stroke-width="4"/></svg><div class="a" style="left:12.80px;top:5.20px;width:3.85px;height:0.48px;background:#858585"></div><div class="a" style="left:39.08px;top:5.20px;width:3.56px;height:0.48px;background:#858585"></div><div class="a" style="left:25.60px;top:3.85px;width:4.23px;height:0.58px;background:#808080"></div></div>
<div class="th" style="top:412.5px"><div class="a" style="left:42.18px;top:1.65px;width:7.44px;height:0.58px;background:#858585"></div><div class="a" style="left:51.70px;top:1.49px;width:1.65px;height:1.32px;background:#8a827b"></div><div class="a" style="left:1.24px;top:4.38px;width:52.69px;height:0.40px;background:#87898a"></div><div class="a" style="left:1.24px;top:14.72px;width:52.69px;height:0.40px;background:#87898a"></div><div class="a" style="left:1.24px;top:33.75px;width:52.69px;height:0.40px;background:#8f9192"></div><div class="a" style="left:1.24px;top:4.38px;width:0.40px;height:10.34px;background:#87898a"></div><div class="a" style="left:25.64px;top:4.80px;width:28.29px;height:9.93px;background:#85a59c"></div><div class="a" style="left:35.57px;top:4.80px;width:4.55px;height:9.93px;background:#6f9c90"></div><div class="a" style="left:44.67px;top:4.80px;width:2.07px;height:9.93px;background:#7ea096"></div><div class="a" style="left:1.24px;top:6.20px;width:52.69px;height:0.40px;background:#8a8f8e"></div><div class="a" style="left:1.82px;top:5.38px;width:8.11px;height:0.50px;background:#858687"></div><div class="a" style="left:16.38px;top:5.38px;width:0.99px;height:0.50px;background:#858687"></div><div class="a" style="left:21.34px;top:5.38px;width:0.99px;height:0.50px;background:#858687"></div><div class="a" style="left:1.24px;top:7.53px;width:52.69px;height:0.40px;background:#8a8f8e"></div><div class="a" style="left:1.82px;top:6.70px;width:3.97px;height:0.50px;background:#858687"></div><div class="a" style="left:16.38px;top:6.70px;width:0.99px;height:0.50px;background:#858687"></div><div class="a" style="left:21.34px;top:6.70px;width:0.99px;height:0.50px;background:#858687"></div><div class="a" style="left:1.24px;top:8.85px;width:52.69px;height:0.40px;background:#8a8f8e"></div><div class="a" style="left:1.82px;top:8.02px;width:4.38px;height:0.50px;background:#858687"></div><div class="a" style="left:16.38px;top:8.02px;width:0.99px;height:0.50px;background:#858687"></div><div class="a" style="left:21.34px;top:8.02px;width:0.99px;height:0.50px;background:#858687"></div><div class="a" style="left:1.24px;top:10.17px;width:52.69px;height:0.40px;background:#8a8f8e"></div><div class="a" style="left:1.82px;top:9.35px;width:2.32px;height:0.50px;background:#858687"></div><div class="a" style="left:16.38px;top:9.35px;width:0.99px;height:0.50px;background:#858687"></div><div class="a" style="left:21.34px;top:9.35px;width:0.99px;height:0.50px;background:#858687"></div><div class="a" style="left:1.24px;top:11.50px;width:52.69px;height:0.40px;background:#8a8f8e"></div><div class="a" style="left:1.82px;top:10.67px;width:5.21px;height:0.50px;background:#858687"></div><div class="a" style="left:16.38px;top:10.67px;width:0.99px;height:0.50px;background:#858687"></div><div class="a" style="left:21.34px;top:10.67px;width:0.99px;height:0.50px;background:#858687"></div><div class="a" style="left:1.24px;top:12.82px;width:52.69px;height:0.40px;background:#8a8f8e"></div><div class="a" style="left:1.82px;top:11.99px;width:1.49px;height:0.50px;background:#858687"></div><div class="a" style="left:16.38px;top:11.99px;width:0.99px;height:0.50px;background:#858687"></div><div class="a" style="left:21.34px;top:11.99px;width:0.99px;height:0.50px;background:#858687"></div><div class="a" style="left:1.24px;top:14.14px;width:52.69px;height:0.40px;background:#8a8f8e"></div><div class="a" style="left:1.82px;top:13.32px;width:4.80px;height:0.50px;background:#858687"></div><div class="a" style="left:16.38px;top:13.32px;width:0.99px;height:0.50px;background:#858687"></div><div class="a" style="left:21.34px;top:13.32px;width:0.99px;height:0.50px;background:#858687"></div><div class="a" style="left:16.13px;top:4.38px;width:0.40px;height:10.34px;background:#8a8f8e"></div><div class="a" style="left:20.68px;top:4.38px;width:0.40px;height:10.34px;background:#8a8f8e"></div><div class="a" style="left:25.64px;top:4.38px;width:0.40px;height:10.34px;background:#8a8f8e"></div><div class="a" style="left:30.60px;top:4.38px;width:0.40px;height:10.34px;background:#8a8f8e"></div><div class="a" style="left:35.57px;top:4.38px;width:0.40px;height:10.34px;background:#8a8f8e"></div><div class="a" style="left:40.12px;top:4.38px;width:0.40px;height:10.34px;background:#8a8f8e"></div><div class="a" style="left:44.67px;top:4.38px;width:0.40px;height:10.34px;background:#8a8f8e"></div><div class="a" style="left:49.21px;top:4.38px;width:0.40px;height:10.34px;background:#8a8f8e"></div><div class="a" style="left:25.23px;top:3.31px;width:4.96px;height:0.50px;background:#808080"></div><div class="a" style="left:1.65px;top:3.80px;width:7.44px;height:0.41px;background:#858585"></div><div class="a" style="left:48.80px;top:3.80px;width:4.96px;height:0.41px;background:#858585"></div><div class="a" style="left:2.07px;top:35.40px;width:8.68px;height:0.58px;background:#878787"></div><div class="a" style="left:25.64px;top:35.40px;width:5.79px;height:0.58px;background:#878787"></div><div class="a" style="left:45.08px;top:35.15px;width:7.86px;height:0.91px;background:#838383"></div></div>
</div>
<div class="a" id="pdfbar">
<svg class="a" style="left:9.600px;top:8.900px" width="8" height="7" viewBox="0 0 8 7"><path d="M0 .6h6.900M0 2.900h6.900M0 5.200h6.900" stroke="#e4e6e7" stroke-width="1.200"/></svg>
<div class="a" style="left:293.600px;top:8.200px;width:9.400px;height:7.400px;background:#1e2124"></div>
<div class="a" style="left:322.200px;top:8.300px;width:.6px;height:7px;background:#4c5053"></div>
<svg class="a" style="left:327px;top:9px" width="8" height="6" viewBox="0 0 8 6"><rect x="1.400" y="2.500" width="5.400" height="1.200" fill="#f1f3f4"/></svg>
<div class="a" style="left:340px;top:8.200px;width:17.200px;height:7.400px;background:#1e2124"></div>
<svg class="a" style="left:362px;top:8px" width="8" height="8" viewBox="0 0 8 8"><rect x="1.500" y="3.500" width="5.200" height="1.200" fill="#f1f3f4"/><rect x="3.500" y="1.500" width="1.200" height="5.200" fill="#f1f3f4"/></svg>
<div class="a" style="left:375px;top:8.300px;width:.6px;height:7px;background:#4c5053"></div>
<svg class="a" style="left:381px;top:6px" width="12" height="12" viewBox="0 0 12 12"><rect x="1.900" y="2.100" width="8.100" height="7.100" rx="1.100" fill="#d9dbdc"/><rect x="3.700" y="4" width="1.100" height="3.300" fill="#24272a"/><rect x="7.100" y="4" width="1.100" height="3.300" fill="#24272a"/><rect x="4.800" y="5.350" width="2.300" height=".6" fill="#24272a"/></svg>
<svg class="a" style="left:395px;top:6px" width="12" height="12" viewBox="0 0 12 12"><circle cx="6.500" cy="5.900" r="2.750" fill="none" stroke="#dcdedf" stroke-width="1.150"/><path d="M1.800 5.900L4.100 4.100V7.700z" fill="#dcdedf"/><path d="M6.500 2L5.300 3.200H7.700z" fill="#dcdedf"/><circle cx="6.700" cy="5.900" r=".9" fill="none" stroke="#dcdedf" stroke-width=".5"/></svg>
<svg class="a" style="left:653px;top:7px" width="10" height="10" viewBox="0 0 10 10"><g transform="translate(1.900 1.300) scale(.78)" fill="#eceeef"><path d="M2.100 0h2.300v2.600h1.700L3.250 5.400.4 2.600h1.700z"/><rect x=".4" y="6.500" width="5.700" height="1.500"/></g></svg>
<svg class="a" style="left:668px;top:7px" width="11" height="10" viewBox="0 0 11 10"><g transform="translate(1.200 1.600) scale(.97 .88)" fill="#eceeef"><rect x="2" y="0" width="4.500" height="1.700"/><rect x="0" y="2.100" width="8.500" height="3.800" rx="1.100"/><rect x="2" y="4.300" width="4.500" height="3.200" stroke="#323639" stroke-width=".7"/></g></svg>
<svg class="a" style="left:684px;top:7px" width="9" height="10" viewBox="0 0 9 10"><g fill="#eceeef"><circle cx="4.500" cy="2.700" r=".82"/><circle cx="4.500" cy="4.700" r=".82"/><circle cx="4.500" cy="6.700" r=".82"/></g></svg>
</div>
</div>

<div class="a" style="left:0;top:23px;width:1000px;height:1px;background:#0c2b35"></div>
<div class="a" style="left:0;top:47px;width:299px;height:1px;background:#07252f"></div>
<div class="a" style="left:299px;top:49px;width:1px;height:471px;background:rgba(255,255,255,.6)"></div>
<div id="tx">
<div class="t" style="left:78.0px;top:16.4px;font-size:12.80px;color:#fff;font-weight:bold;letter-spacing:-0.172px;-webkit-text-stroke:.3px #fff">TECHPACKER</div>
<div class="t" style="left:191.2px;top:18.8px;font-size:10.00px;color:#28464e">\</div>
<div class="t" style="left:1620.0px;top:16.7px;font-size:11.80px;color:#929ca1;letter-spacing:-0.060px">Search Techpacks, Cards ...</div>
<div class="t" style="left:1809.8px;top:17.6px;font-size:10.80px;color:#a5b3b7;letter-spacing:0.327px">WHAT'S NEW</div>
<div class="t" style="left:1942.3px;top:14.4px;font-size:10.00px;color:#fff;font-weight:bold">5</div>
<div class="t" style="left:1907.8px;top:67.9px;font-size:11.00px;color:#fff;font-weight:bold;letter-spacing:-0.156px">SAVE &amp; SEND</div>
<div class="t" style="left:32.0px;top:114.1px;font-size:10.80px;color:#74d8bd;letter-spacing:0.127px">DOC SETTINGS</div>
<div class="t" style="left:160.0px;top:114.1px;font-size:10.80px;color:#b3b3b3;letter-spacing:0.027px">VERSIONS</div>
<div class="t" style="left:39.8px;top:155.9px;font-size:10.80px;color:#8c8c8c;letter-spacing:0.615px">Doc Settings</div>
<div class="t" style="left:33.4px;top:194.8px;font-size:12.80px;color:#505050;letter-spacing:0.586px">Include Summary</div>
<div class="t" style="left:33.4px;top:235.8px;font-size:12.80px;color:#505050;letter-spacing:0.702px">Include comments</div>
<div class="t" style="left:33.4px;top:277.2px;font-size:12.80px;color:#505050;letter-spacing:0.567px">Include files</div>
<div class="t" style="left:33.4px;top:320.8px;font-size:12.80px;color:#505050;letter-spacing:0.356px">Hi-Res images</div>
<div class="t" style="left:10.0px;top:383.2px;font-size:12.80px;color:#505050;letter-spacing:0.626px">Document font size</div>
<div class="t" style="left:63.6px;top:443.1px;font-size:10.80px;color:#8c8c8c;letter-spacing:0.625px">Sketches</div>
<div class="t" style="left:63.6px;top:493.1px;font-size:10.80px;color:#8c8c8c;letter-spacing:0.623px">Materials</div>
<div class="t" style="left:63.6px;top:543.1px;font-size:10.80px;color:#8c8c8c;letter-spacing:0.725px">Measurements</div>
<div class="t" style="left:63.6px;top:593.1px;font-size:10.80px;color:#8c8c8c;letter-spacing:0.630px">Costing</div>
<div class="t" style="left:532.0px;top:369.6px;font-size:7.80px;color:#a8a8a8;letter-spacing:-0.031px">Font size</div>
<div class="t" style="left:534.1px;top:385.8px;font-size:9.20px;color:#b0b0b0">8</div>
<div class="t" style="left:652.6px;top:114.0px;font-size:10.60px;color:#fff;font-weight:bold;letter-spacing:-0.223px;-webkit-text-stroke:.35px #fff">Chelsea Leather Boots</div>
<div class="t" style="left:1193.5px;top:116.4px;font-size:10.40px;color:#fff;font-weight:bold">1</div>
<div class="t" style="left:1209.6px;top:116.4px;font-size:10.40px;color:#fff;font-weight:bold;letter-spacing:0.351px">/ 10</div>
<div class="t" style="left:1284.6px;top:116.4px;font-size:10.40px;color:#fff;font-weight:bold">100%</div>
<div class="t" style="left:713.9px;top:247.2px;font-size:11.20px;color:#fff;font-weight:bold">1</div>
<div class="t" style="left:713.9px;top:362.2px;font-size:11.20px;color:#fff;font-weight:bold">2</div>
<div class="t" style="left:713.9px;top:477.2px;font-size:11.20px;color:#fff;font-weight:bold">3</div>
<div class="t" style="left:713.9px;top:592.2px;font-size:11.20px;color:#fff;font-weight:bold">4</div>
<div class="t" style="left:713.9px;top:707.2px;font-size:11.20px;color:#fff;font-weight:bold">5</div>
<div class="t" style="left:713.9px;top:822.2px;font-size:11.20px;color:#fff;font-weight:bold">6</div>
<div class="t" style="left:713.9px;top:937.2px;font-size:11.20px;color:#fff;font-weight:bold">7</div>
<div class="t" style="left:1651.0px;top:161.8px;font-size:12.54px;color:#444">Chelsea Leather Boots</div>
<div class="t" style="left:1429.6px;top:209.3px;font-size:8.38px;color:#414141;font-weight:bold">Page Index</div>
<div class="t" style="left:1429.6px;top:223.1px;font-size:8.38px;color:#414141">- Summary</div>
<div class="t" style="left:1647.4px;top:223.1px;font-size:8.38px;color:#414141">P.1</div>
<div class="t" style="left:1429.6px;top:236.7px;font-size:8.38px;color:#414141">- Sketches</div>
<div class="t" style="left:1647.4px;top:236.7px;font-size:8.38px;color:#414141">P.2 - P.2</div>
<div class="t" style="left:1429.6px;top:250.4px;font-size:8.38px;color:#414141">- Materials</div>
<div class="t" style="left:1647.4px;top:250.4px;font-size:8.38px;color:#414141">P.3 - P.6</div>
<div class="t" style="left:1429.6px;top:264.0px;font-size:8.38px;color:#414141">- Sizes</div>
<div class="t" style="left:1647.4px;top:264.0px;font-size:8.38px;color:#414141">P.7 - P.8</div>
<div class="t" style="left:1429.6px;top:277.7px;font-size:8.38px;color:#414141">- Costing</div>
<div class="t" style="left:1647.4px;top:277.7px;font-size:8.38px;color:#414141">P.9 - P.10</div>
<div class="t" style="left:1429.6px;top:377.5px;font-size:8.38px;color:#414141;font-weight:bold">Members</div>
<div class="t" style="left:1429.6px;top:391.5px;font-size:8.38px;color:#414141">- Owner</div>
<div class="t" style="left:1569.6px;top:391.5px;font-size:8.38px;color:#414141">Oleksandra Baukh</div>
<div class="t" style="left:1429.6px;top:425.9px;font-size:8.38px;color:#414141;font-weight:bold">Style Info</div>
<div class="t" style="left:1429.6px;top:439.9px;font-size:8.38px;color:#414141">- Units: Inches</div>
<div class="t" style="left:1429.6px;top:453.5px;font-size:8.38px;color:#414141">- Sizes: 6, 7, 8, 9, 10, 11</div>
<div class="t" style="left:1429.6px;top:467.7px;font-size:8.38px;color:#414141">- Sample Size: 8</div>
<div class="t" style="left:1429.6px;top:501.9px;font-size:8.38px;color:#414141;font-weight:bold">Existing Versions</div>
<div class="t" style="left:1429.6px;top:516.1px;font-size:8.38px;color:#414141">V2 by Oleksandra Baukh</div>
<div class="t" style="left:1637.8px;top:516.1px;font-size:8.38px;color:#414141">Jul 16, 2022 15:48:4</div>
<div class="t" style="left:1429.6px;top:529.7px;font-size:8.38px;color:#414141">V1 by Oleksandra Baukh</div>
<div class="t" style="left:1637.8px;top:529.7px;font-size:8.38px;color:#414141">Jul 16, 2022 10:46:50</div>
<div class="t" style="left:996.6px;top:722.3px;font-size:8.38px;color:#414141">Confidential Information. All rights reserved.</div>
<div class="t" style="left:1384.6px;top:722.3px;font-size:8.38px;color:#414141">Oleksandra Baukh</div>
<div class="t" style="left:1704.6px;top:711.1px;font-size:8.38px;color:#414141">Last Updated on Aug 9, 2022 14 : 14</div>
<div class="t" style="left:1704.6px;top:722.3px;font-size:8.38px;color:#414141">Page 1 of 10</div>
<div class="t" style="left:1651.0px;top:794.1px;font-size:12.54px;color:#444">Chelsea Leather Boots</div>
<div class="t" style="left:1394.0px;top:823.5px;font-size:12.54px;color:#444">Sketches</div>
<div class="t" style="left:1181.0px;top:843.7px;font-size:12.54px;color:#444">Side view</div>
<div class="t" style="left:1600.0px;top:843.7px;font-size:12.54px;color:#444">Color ways</div>
<div class="t" style="left:1445.8px;top:870.3px;font-size:8.38px;color:#414141">Pantone 4755 C Hex: #D7C4B7</div>
<div class="t" style="left:1445.8px;top:883.7px;font-size:8.38px;color:#414141">Sole: Pantone Black C</div>
<div class="t" style="left:1426.8px;top:870.3px;font-size:9.40px;color:#fff;font-weight:bold">1</div>
<div class="t" style="left:1426.8px;top:884.1px;font-size:9.40px;color:#fff;font-weight:bold">2</div>
</div>
</body></html>
